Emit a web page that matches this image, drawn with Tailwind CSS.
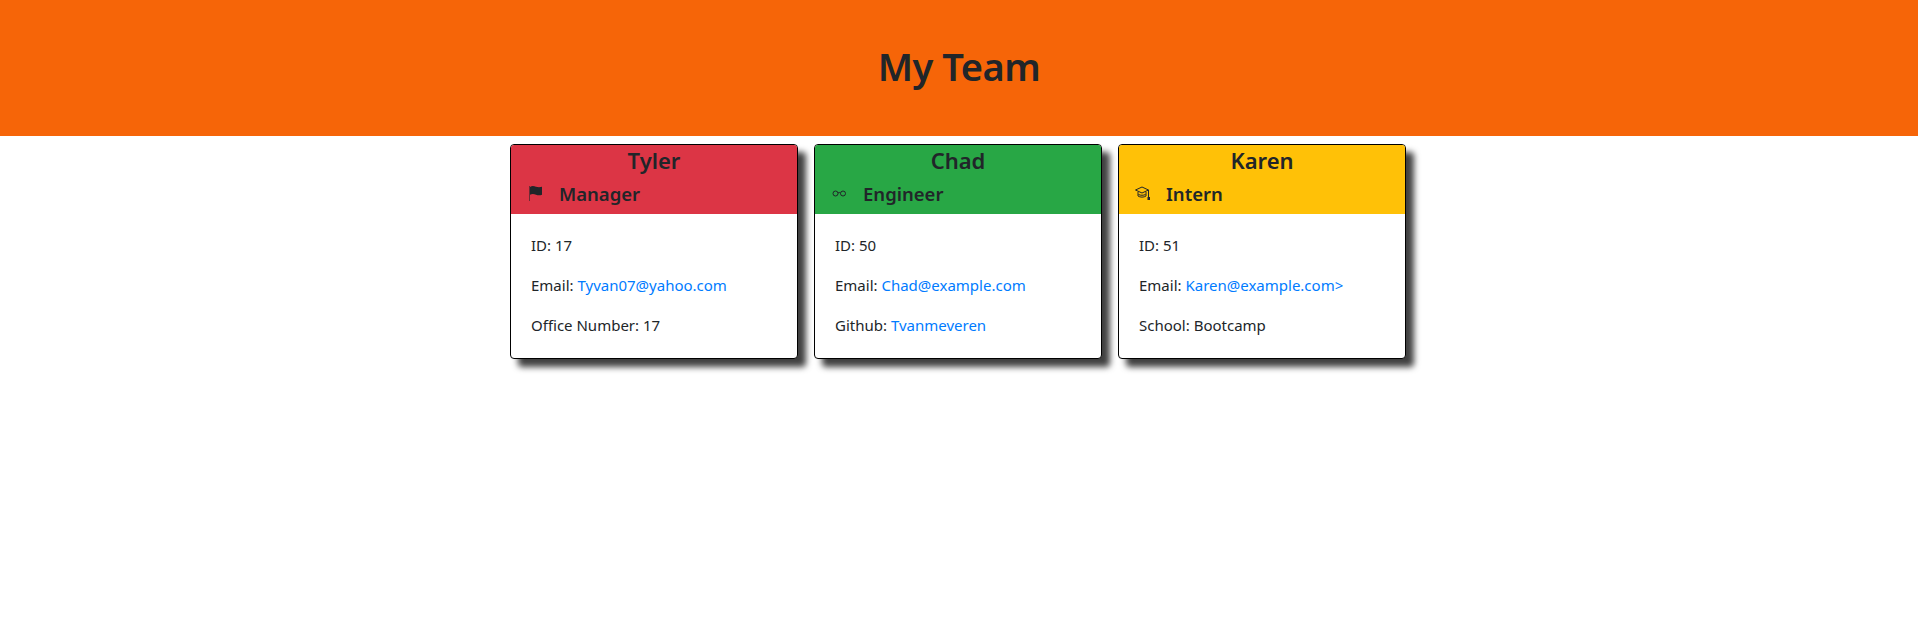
<!DOCTYPE html>
<html lang="en">
<head>
<meta charset="utf-8">
<title>My Team</title>
<script src="https://cdn.jsdelivr.net/npm/@tailwindcss/browser@4"></script>
</head>
<body class="min-h-[624px] bg-white text-[#212529] font-['Noto_Sans','Open_Sans',sans-serif]">
<header class="h-[136px] bg-[#f66508] flex items-center justify-center pb-[4px]">
  <h1 class="text-[38px] font-semibold leading-[48px] tracking-[-0.5px]">My Team</h1>
</header>
<main class="mt-2 pr-[2px] flex justify-center gap-4 items-start">
  <section class="w-[288px] h-[215px] bg-white border border-black rounded-[4px] shadow-[8px_8px_6px_#404040] overflow-hidden">
    <div class="h-[69px] bg-[#dc3545]">
      <h2 class="text-center text-[22px] leading-[31px] font-semibold">Tyler</h2>
      <div class="flex items-center pl-[18px] mt-[5px]">
        <svg class="w-[14px] h-[16px] mb-[3px]" viewBox="0 0 14 16" fill="#212529"><path d="M0 1h1v15H0z" opacity=".6"/><path d="M1 2c2-1.500 4-1 6-.3 2 .6 4 .6 6 0v8c-2 .8-4 .7-6 0-2-.7-4-.9-6 0z"/></svg>
        <h3 class="ml-[16px] text-[18.500px] leading-[26px] font-semibold">Manager</h3>
      </div>
    </div>
    <div class="px-5 pt-[21px] text-[15px] leading-[21px] flex flex-col gap-[19px]">
      <p>ID: 17</p>
      <p>Email: <a href="#" class="text-[#007bff]">Tyvan07@yahoo.com</a></p>
      <p>Office Number: 17</p>
    </div>
  </section>
  <section class="w-[288px] h-[215px] bg-white border border-black rounded-[4px] shadow-[8px_8px_6px_#404040] overflow-hidden">
    <div class="h-[69px] bg-[#28a745]">
      <h2 class="text-center text-[22px] leading-[31px] font-semibold">Chad</h2>
      <div class="flex items-center pl-[17px] mt-[5px]">
        <svg class="w-[15px] h-[16px] mb-[3px]" viewBox="0 0 15 16" fill="none" stroke="#212529" stroke-width="1"><circle cx="3.500" cy="8.500" r="2.500"/><circle cx="11" cy="8.500" r="2.500"/><path d="M6 8q1.250-1 2.500 0"/></svg>
        <h3 class="ml-[16px] text-[18.500px] leading-[26px] font-semibold">Engineer</h3>
      </div>
    </div>
    <div class="px-5 pt-[21px] text-[15px] leading-[21px] flex flex-col gap-[19px]">
      <p>ID: 50</p>
      <p>Email: <a href="#" class="text-[#007bff]">Chad@example.com</a></p>
      <p>Github: <a href="#" class="text-[#007bff]">Tvanmeveren</a></p>
    </div>
  </section>
  <section class="w-[288px] h-[215px] bg-white border border-black rounded-[4px] shadow-[8px_8px_6px_#404040] overflow-hidden">
    <div class="h-[69px] bg-[#ffc107]">
      <h2 class="text-center text-[22px] leading-[31px] font-semibold">Karen</h2>
      <div class="flex items-center pl-[16px] mt-[5px]">
        <svg class="w-[16px] h-[16px] mb-[3px]" viewBox="0 0 16 16" fill="none" stroke="#212529" stroke-width="1"><path d="M.500 5 7 2l6.500 3L7 8z"/><path d="M3 7v4c2 1.500 6 1.500 8 0V7"/><path d="M3.500 9.500c2 1 5 1 7 0"/><path d="M13.500 5v7"/><path d="M12.500 12h2.500v3h-2.500z" fill="#212529" stroke="none"/></svg>
        <h3 class="ml-[15px] text-[18.500px] leading-[26px] font-semibold">Intern</h3>
      </div>
    </div>
    <div class="px-5 pt-[21px] text-[15px] leading-[21px] flex flex-col gap-[19px]">
      <p>ID: 51</p>
      <p>Email: <a href="#" class="text-[#007bff]">Karen@example.com&gt;</a></p>
      <p>School: Bootcamp</p>
    </div>
  </section>
</main>
</body>
</html>
